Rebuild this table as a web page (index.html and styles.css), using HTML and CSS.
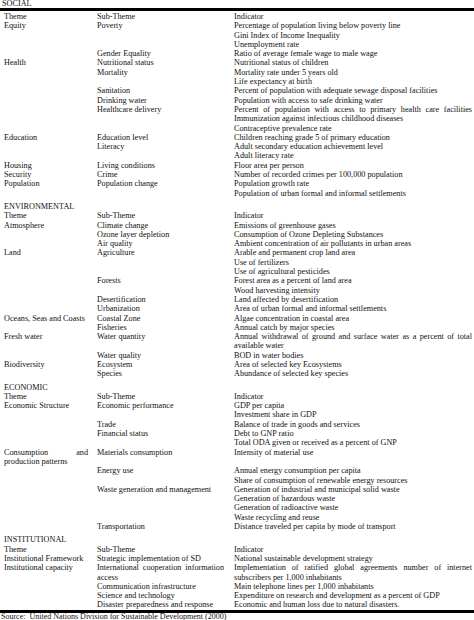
FILE: index.html
```html
<!DOCTYPE html>
<html>
<head>
<meta charset="utf-8">
<link rel="stylesheet" href="styles.css">
</head>
<body>
<div class="page">
  <div class="top-title">SOCIAL</div>
  <table class="ind">
    <colgroup><col class="c1"><col class="c2"><col class="c3"></colgroup>
    <tbody>
      <tr class="first"><td>Theme</td><td>Sub-Theme</td><td>Indicator</td></tr>
      <tr><td>Equity</td><td>Poverty</td><td>Percentage of population living below poverty line</td></tr>
      <tr><td></td><td></td><td>Gini Index of Income Inequality</td></tr>
      <tr><td></td><td></td><td>Unemployment rate</td></tr>
      <tr><td></td><td>Gender Equality</td><td>Ratio of average female wage to male wage</td></tr>
      <tr><td>Health</td><td>Nutritional status</td><td>Nutritional status of children</td></tr>
      <tr><td></td><td>Mortality</td><td>Mortality rate under 5 years old</td></tr>
      <tr><td></td><td></td><td>Life expectancy at birth</td></tr>
      <tr><td></td><td>Sanitation</td><td>Percent of population with adequate sewage disposal facilities</td></tr>
      <tr><td></td><td>Drinking water</td><td>Population with access to safe drinking water</td></tr>
      <tr><td></td><td>Healthcare delivery</td><td><span class="jl">Percent of population with access to primary health care facilities</span></td></tr>
      <tr><td></td><td></td><td>Immunization against infectious childhood diseases</td></tr>
      <tr><td></td><td></td><td>Contraceptive prevalence rate</td></tr>
      <tr><td>Education</td><td>Education level</td><td>Children reaching grade 5 of primary education</td></tr>
      <tr><td></td><td>Literacy</td><td>Adult secondary education achievement level</td></tr>
      <tr><td></td><td></td><td>Adult literacy rate</td></tr>
      <tr><td>Housing</td><td>Living conditions</td><td>Floor area per person</td></tr>
      <tr><td>Security</td><td>Crime</td><td>Number of recorded crimes per 100,000 population</td></tr>
      <tr><td>Population</td><td>Population change</td><td>Population growth rate</td></tr>
      <tr><td></td><td></td><td>Population of urban formal and informal settlements</td></tr>

      <tr class="sec"><td colspan="3">ENVIRONMENTAL</td></tr>
      <tr><td>Theme</td><td>Sub-Theme</td><td>Indicator</td></tr>
      <tr><td>Atmosphere</td><td>Climate change</td><td>Emissions of greenhouse gases</td></tr>
      <tr><td></td><td>Ozone layer depletion</td><td>Consumption of Ozone Depleting Substances</td></tr>
      <tr><td></td><td>Air quality</td><td>Ambient concentration of air pollutants in urban areas</td></tr>
      <tr><td>Land</td><td>Agriculture</td><td>Arable and permanent crop land area</td></tr>
      <tr><td></td><td></td><td>Use of fertilizers</td></tr>
      <tr><td></td><td></td><td>Use of agricultural pesticides</td></tr>
      <tr><td></td><td>Forests</td><td>Forest area as a percent of land area</td></tr>
      <tr><td></td><td></td><td>Wood harvesting intensity</td></tr>
      <tr><td></td><td>Desertification</td><td>Land affected by desertification</td></tr>
      <tr><td></td><td>Urbanization</td><td>Area of urban formal and informal settlements</td></tr>
      <tr><td>Oceans, Seas and Coasts</td><td>Coastal Zone</td><td>Algae concentration in coastal area</td></tr>
      <tr><td></td><td>Fisheries</td><td>Annual catch by major species</td></tr>
      <tr><td>Fresh water</td><td>Water quantity</td><td><span class="jl">Annual withdrawal of ground and surface water as a percent of total</span><span class="ln">available water</span></td></tr>
      <tr><td></td><td>Water quality</td><td>BOD in water bodies</td></tr>
      <tr><td>Biodiversity</td><td>Ecosystem</td><td>Area of selected key Ecosystems</td></tr>
      <tr><td></td><td>Species</td><td>Abundance of selected key species</td></tr>

      <tr class="sec"><td colspan="3">ECONOMIC</td></tr>
      <tr><td>Theme</td><td>Sub-Theme</td><td>Indicator</td></tr>
      <tr><td>Economic Structure</td><td>Economic performance</td><td>GDP per capita</td></tr>
      <tr><td></td><td></td><td>Investment share in GDP</td></tr>
      <tr><td></td><td>Trade</td><td>Balance of trade in goods and services</td></tr>
      <tr><td></td><td>Financial status</td><td>Debt to GNP ratio</td></tr>
      <tr><td></td><td></td><td>Total ODA given or received as a percent of GNP</td></tr>
      <tr><td><span class="jl">Consumption and</span><span class="ln">production patterns</span></td><td>Materials consumption</td><td>Intensity of material use</td></tr>
      <tr><td></td><td>Energy use</td><td>Annual energy consumption per capita</td></tr>
      <tr><td></td><td></td><td>Share of consumption of renewable energy resources</td></tr>
      <tr><td></td><td>Waste generation and management</td><td>Generation of industrial and municipal solid waste</td></tr>
      <tr><td></td><td></td><td>Generation of hazardous waste</td></tr>
      <tr><td></td><td></td><td>Generation of radioactive waste</td></tr>
      <tr><td></td><td></td><td>Waste recycling and reuse</td></tr>
      <tr><td></td><td>Transportation</td><td>Distance traveled per capita by mode of transport</td></tr>

      <tr class="sec"><td colspan="3">INSTITUTIONAL</td></tr>
      <tr><td>Theme</td><td>Sub-Theme</td><td>Indicator</td></tr>
      <tr><td>Institutional Framework</td><td>Strategic implementation of SD</td><td>National sustainable development strategy</td></tr>
      <tr><td>Institutional capacity</td><td><span class="jl">International cooperation information</span><span class="ln">access</span></td><td><span class="jl">Implementation of ratified global agreements number of internet</span><span class="ln">subscribers per 1,000 inhabitants</span></td></tr>
      <tr><td></td><td>Communication infrastructure</td><td>Main telephone lines per 1,000 inhabitants</td></tr>
      <tr><td></td><td>Science and technology</td><td>Expenditure on research and development as a percent of GDP</td></tr>
      <tr><td></td><td>Disaster preparedness and response</td><td>Economic and human loss due to natural disasters.</td></tr>
    </tbody>
  </table>
  <div class="source">Source:&nbsp; United Nations Division for Sustainable Development (2000)</div>
</div>
</body>
</html>
```

FILE: styles.css
```css
html, body {
  margin: 0;
  padding: 0;
  background: #ffffff;
}

.page {
  width: 474px;
  height: 620px;
  overflow: hidden;
  font-family: "Liberation Serif", "Times New Roman", serif;
  font-size: 8.2px;
  line-height: 9.3px;
  color: #111111;
}

.top-title {
  margin-top: -1px;
  padding-left: 2px;
  height: 9px;
}

.ind {
  width: 478px;
  table-layout: fixed;
  border-collapse: collapse;
  border-top: 3px solid #000;
  border-bottom: 3px solid #000;
}

.c1 { width: 95px; }
.c2 { width: 137px; }
.c3 { width: 246px; }

.ind td {
  padding: 0;
  vertical-align: top;
  white-space: nowrap;
}

.ind td:nth-child(1) { padding-left: 4px; padding-right: 7px; }
.ind td:nth-child(2) { padding-left: 2px; padding-right: 8px; }
.ind td:nth-child(3) { padding-left: 2px; padding-right: 6px; }

.ind tr.sec td {
  padding-left: 4px;
  padding-top: 4px;
}

.ind tr.first td { padding-top: 1px; }

.jl {
  display: block;
  text-align: justify;
  text-align-last: justify;
  white-space: normal;
}

.ln {
  display: block;
}

.source {
  padding-left: 1px;
  font-size: 8px;
  line-height: 7px;
}
```
